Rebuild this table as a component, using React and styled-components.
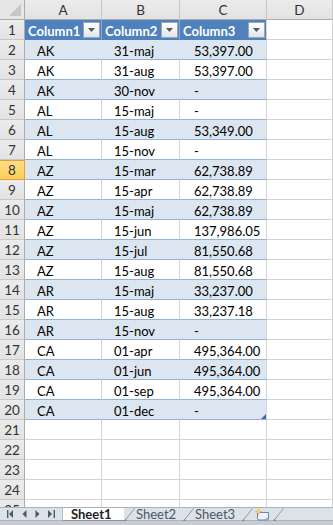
import React from "react";
import styled, { createGlobalStyle } from "styled-components";

const Global = createGlobalStyle`
  html, body { margin: 0; padding: 0; background: #fff; overflow: hidden; }
  body { font-family: Lato, "Liberation Sans", sans-serif; }
`;

const Window = styled.div`
  width: 333px;
  height: 525px;
  display: flex;
  flex-direction: column;
  overflow: hidden;
  background: #fff;
`;

const Grid = styled.div`
  display: grid;
  grid-template-columns: 25px 77px 78px 87px 66px;
  grid-auto-rows: 20px;
  height: 507px;
  overflow: hidden;
  flex: none;
`;

const Corner = styled.div`
  position: relative;
  box-sizing: border-box;
  background: #e6e6e6;
  border-right: 1px solid #ababab;
  border-bottom: 1px solid #ababab;
  &::after {
    content: "";
    position: absolute;
    right: 3px;
    bottom: 3px;
    width: 0;
    height: 0;
    border-left: 12px solid transparent;
    border-bottom: 12px solid #c6c6c6;
  }
`;

const ColHead = styled.div`
  box-sizing: border-box;
  background: linear-gradient(#ececec, #e2e2e2);
  border-right: 1px solid #c8c8c8;
  border-bottom: 1px solid #ababab;
  display: flex;
  align-items: center;
  justify-content: center;
  font-size: 13.5px;
  color: #333;
  padding-top: 1px;
`;

const RowHead = styled.div`
  box-sizing: border-box;
  background: ${(p) => (p.$active ? "linear-gradient(#fde08a, #f9cf5c)" : "linear-gradient(#ececec, #e2e2e2)")};
  border-right: 1px solid ${(p) => (p.$active ? "#e79e36" : "#ababab")};
  border-bottom: 1px solid ${(p) => (p.$active ? "#e79e36" : "#c8c8c8")};
  box-shadow: ${(p) => (p.$active ? "inset 0 1px 0 #e79e36" : "none")};
  display: flex;
  align-items: center;
  justify-content: center;
  font-size: 13.5px;
  color: #333;
  padding-top: 1px;
`;

const bg = { head: "#4f81bd", band: "#dce6f1", plain: "#ffffff", empty: "#ffffff" };
const bottomColor = { head: "#4f81bd", band: "#95b3d7", plain: "#95b3d7", empty: "#d4d4d4" };

const Cell = styled.div`
  position: relative;
  box-sizing: border-box;
  background: ${(p) => bg[p.$kind]};
  border-bottom: 1px solid ${(p) => bottomColor[p.$kind]};
  border-right: 1px solid
    ${(p) =>
      p.$last
        ? "#d4d4d4"
        : p.$kind === "band"
        ? "#dce6f1"
        : p.$kind === "head"
        ? "#8aabd6"
        : "#d4d4d4"};
  display: flex;
  align-items: center;
  padding-left: ${(p) => p.$indent}px;
  padding-top: 2px;
  font-size: 13px;
  color: #000;
  white-space: nowrap;
  overflow: hidden;
`;

const HeadCell = styled(Cell)`
  padding-left: 3px;
  padding-right: 1px;
  justify-content: space-between;
  font-weight: 700;
  color: #fff;
`;

const FilterButton = styled.span`
  box-sizing: border-box;
  width: 17px;
  height: 16px;
  margin-top: -2px;
  border: 1px solid #9ca6b3;
  background: linear-gradient(#ffffff, #e3e6ea);
  display: flex;
  align-items: center;
  justify-content: center;
  flex: none;
`;

const Handle = styled.span`
  position: absolute;
  right: 0;
  bottom: 0;
  width: 0;
  height: 0;
  border-left: 5px solid transparent;
  border-bottom: 5px solid #3e63b0;
`;

const TabBar = styled.div`
  flex: 1;
  box-sizing: border-box;
  border-top: 1px solid #a9b0ba;
  background: #dde2e8;
  display: flex;
  align-items: flex-start;
  position: relative;
  &::after {
    content: "";
    position: absolute;
    left: 0;
    right: 0;
    bottom: 0;
    height: 4px;
    background: #c8ccd2;
    border-top: 1px solid #aeb4bc;
  }
`;

const Nav = styled.div`
  box-sizing: border-box;
  width: 63px;
  height: 13px;
  border-right: 1px solid #b5bcc6;
  border-bottom: 1px solid #b5bcc6;
  display: flex;
  align-items: center;
  justify-content: space-around;
  padding: 0 3px;
  flex: none;
`;

const Tab = styled.div`
  box-sizing: border-box;
  height: 13px;
  display: flex;
  align-items: center;
  flex: none;
  font-size: 13px;
  line-height: 1;
  padding: 0 ${(p) => (p.$active ? "8px" : "0 0 1px")};
  width: ${(p) => (p.$w ? p.$w + "px" : "auto")};
  background: ${(p) => (p.$active ? "#fff" : "transparent")};
  font-weight: ${(p) => (p.$active ? 700 : 400)};
  color: ${(p) => (p.$active ? "#222" : "#4a5567")};
  border-bottom: ${(p) => (p.$active ? "1px solid #8a929c" : "none")};
  position: relative;
  z-index: 1;
`;

const Slant = styled.svg`
  flex: none;
  display: block;
  position: relative;
  z-index: 1;
`;

const NavIcon = ({ type }) => {
  const c = "#4b5a6e";
  if (type === "first")
    return (
      <svg width="7" height="8" viewBox="0 0 7 8">
        <rect x="0" y="0" width="1.4" height="8" fill={c} />
        <polygon points="6,0 6,8 2,4" fill={c} />
      </svg>
    );
  if (type === "prev")
    return (
      <svg width="5" height="8" viewBox="0 0 5 8">
        <polygon points="4.5,0 4.5,8 0.5,4" fill={c} />
      </svg>
    );
  if (type === "next")
    return (
      <svg width="5" height="8" viewBox="0 0 5 8">
        <polygon points="0.5,0 0.5,8 4.5,4" fill={c} />
      </svg>
    );
  return (
    <svg width="7" height="8" viewBox="0 0 7 8">
      <polygon points="0,0 0,8 4,4" fill={c} />
      <rect x="5.6" y="0" width="1.4" height="8" fill={c} />
    </svg>
  );
};

const SlantLine = () => (
  <Slant width="11" height="14" viewBox="0 0 11 14">
    <line x1="0.5" y1="13" x2="10.5" y2="0.5" stroke="#8f98a4" strokeWidth="1" />
    <polygon points="0,13 3,13 1.5,11" fill="#7d8794" />
  </Slant>
);

const NewSheetIcon = () => (
  <svg width="16" height="13" viewBox="0 0 16 13">
    <path d="M3.5 4.5 H14.5 V10.5 Q14.5 12 13 12 H5 Q3.5 12 3.5 10.5 Z" fill="#eef3f9" stroke="#6a86aa" strokeWidth="1" />
    <path d="M11 12 Q12 10 14.5 10.5" fill="none" stroke="#6a86aa" strokeWidth="0.8" />
    <g transform="translate(4.5,3.8)">
      <polygon points="0,-3.6 0.9,-1 3.6,0 0.9,1 0,3.6 -0.9,1 -3.6,0 -0.9,-1" fill="#f3a621" />
      <circle cx="0" cy="0" r="1.3" fill="#ffe27a" />
    </g>
  </svg>
);

const Triangle = () => (
  <svg width="7" height="4" viewBox="0 0 7 4">
    <polygon points="0,0 7,0 3.5,4" fill="#555b63" />
  </svg>
);

const rows = [
  ["AK", "31-maj", "53,397.00"],
  ["AK", "31-aug", "53,397.00"],
  ["AK", "30-nov", "-"],
  ["AL", "15-maj", "-"],
  ["AL", "15-aug", "53,349.00"],
  ["AL", "15-nov", "-"],
  ["AZ", "15-mar", "62,738.89"],
  ["AZ", "15-apr", "62,738.89"],
  ["AZ", "15-maj", "62,738.89"],
  ["AZ", "15-jun", "137,986.05"],
  ["AZ", "15-jul", "81,550.68"],
  ["AZ", "15-aug", "81,550.68"],
  ["AR", "15-maj", "33,237.00"],
  ["AR", "15-aug", "33,237.18"],
  ["AR", "15-nov", "-"],
  ["CA", "01-apr", "495,364.00"],
  ["CA", "01-jun", "495,364.00"],
  ["CA", "01-sep", "495,364.00"],
  ["CA", "01-dec", "-"],
];

const indents = [12, 12, 14];

export default function App() {
  const cells = [];
  cells.push(<Corner key="corner" />);
  ["A", "B", "C", "D"].forEach((l) => cells.push(<ColHead key={"h" + l}>{l}</ColHead>));

  cells.push(<RowHead key="r1">1</RowHead>);
  ["Column1", "Column2", "Column3"].forEach((t, i) =>
    cells.push(
      <HeadCell key={"t" + i} $kind="head" $indent={3} $last={i === 2}>
        <span>{t}</span>
        <FilterButton>
          <Triangle />
        </FilterButton>
      </HeadCell>
    )
  );
  cells.push(<Cell key="d1" $kind="empty" $indent={0} />);

  rows.forEach((r, idx) => {
    const n = idx + 2;
    const kind = n % 2 === 0 ? "band" : "plain";
    cells.push(
      <RowHead key={"r" + n} $active={n === 8}>
        {n}
      </RowHead>
    );
    r.forEach((v, i) =>
      cells.push(
        <Cell key={n + "-" + i} $kind={kind} $indent={indents[i]} $last={i === 2}>
          {v}
          {n === 20 && i === 2 && <Handle />}
        </Cell>
      )
    );
    cells.push(<Cell key={"d" + n} $kind="empty" $indent={0} />);
  });

  for (let n = 21; n <= 25; n++) {
    cells.push(<RowHead key={"r" + n}>{n}</RowHead>);
    for (let i = 0; i < 4; i++) cells.push(<Cell key={n + "-" + i} $kind="empty" $indent={0} />);
  }

  return (
    <Window>
      <Global />
      <Grid>{cells}</Grid>
      <TabBar>
        <Nav>
          <NavIcon type="first" />
          <NavIcon type="prev" />
          <NavIcon type="next" />
          <NavIcon type="last" />
        </Nav>
        <Tab $active $w={61}>Sheet1</Tab>
        <SlantLine />
        <Tab $w={48}>Sheet2</Tab>
        <SlantLine />
        <Tab $w={48}>Sheet3</Tab>
        <SlantLine />
        <Tab $w={20}>
          <NewSheetIcon />
        </Tab>
        <SlantLine />
      </TabBar>
    </Window>
  );
}
